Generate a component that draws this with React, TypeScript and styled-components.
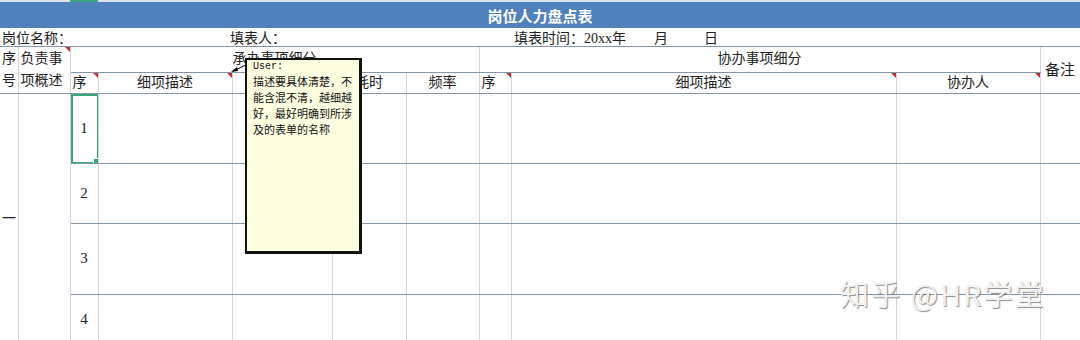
import React from 'react'
import styled, { createGlobalStyle } from 'styled-components'

const hLine = '#8596ab'
const vLine = '#d2d7de'

const GlobalStyle = createGlobalStyle`
  body {
    margin: 0;
    background: #fff;
    overflow: hidden;
    font-family: "Liberation Serif", "Noto Sans CJK SC", serif;
    color: #222;
  }
`

const Page = styled.div`
  position: relative;
  width: 1080px;
  height: 340px;
  overflow: hidden;
  background: #fff;
`

const TopStrip = styled.div`
  display: flex;
  height: 2px;
  background: #dde2e8;
`

const TopMark = styled.div`
  margin-left: 70px;
  width: 28px;
  background: #3aa57f;
`

const TitleBar = styled.div`
  display: flex;
  align-items: center;
  justify-content: center;
  height: 26px;
  background: #4f81bd;
  color: #fff;
  font-family: "Noto Sans CJK SC", sans-serif;
  font-weight: 700;
  font-size: 15px;
`

const InfoRow = styled.div`
  display: flex;
  align-items: center;
  height: 19px;
  border-bottom: 1px solid ${hLine};
  font-size: 14px;
  box-sizing: border-box;
`

const InfoItem = styled.div<{ $w?: number }>`
  flex: ${({ $w }) => ($w ? `0 0 ${$w}px` : '1')};
  padding-left: 2px;
  white-space: nowrap;
`

const DatePart = styled.span<{ $gap: number }>`
  margin-left: ${({ $gap }) => $gap}px;
`

const Sheet = styled.table`
  width: 1080px;
  table-layout: fixed;
  border-collapse: collapse;
  font-size: 14px;
`

const Row = styled.tr<{ $h: number }>`
  height: ${({ $h }) => $h}px;
`

const Cell = styled.td<{ $align?: string; $flat?: boolean; $lh?: number; $size?: number }>`
  position: relative;
  padding: 0 2px;
  text-align: ${({ $align }) => $align ?? 'center'};
  vertical-align: middle;
  border-right: 1px solid ${vLine};
  border-bottom: ${({ $flat }) => ($flat ? 'none' : `1px solid ${hLine}`)};
  line-height: ${({ $lh }) => $lh ?? 18}px;
  font-size: ${({ $size }) => $size ?? 14}px;
  overflow: hidden;
  white-space: nowrap;
`

const WrapCell = styled(Cell)`
  white-space: normal;
  word-break: break-all;
`

const Num = styled.span`
  font-size: 15px;
`

const Selected = styled.div`
  position: absolute;
  inset: 0 -1px -1px 0;
  border: 2px solid #35a67c;
  pointer-events: none;
`

const Handle = styled.div`
  position: absolute;
  right: -3px;
  bottom: -3px;
  width: 5px;
  height: 5px;
  background: #35a67c;
  border: 1px solid #fff;
`

const Corner = styled.span`
  position: absolute;
  top: 0;
  right: 0;
  width: 0;
  height: 0;
  border-top: 5px solid #c62f3a;
  border-left: 5px solid transparent;
`

const Note = styled.div`
  position: absolute;
  left: 245px;
  top: 58px;
  width: 117px;
  height: 196px;
  box-sizing: border-box;
  background: #ffffe1;
  border: 2px solid #111;
  border-right-width: 3px;
  border-bottom-width: 3px;
  padding: 1px 6px;
  font-family: "Noto Sans CJK SC", sans-serif;
  font-size: 11px;
  line-height: 16px;
  color: #111;
`

const NoteAuthor = styled.div`
  font-family: "Liberation Mono", monospace;
  font-size: 10px;
  line-height: 12px;
`

const NoteLine = styled.div`
  white-space: nowrap;
`

const Pointer = styled.svg`
  position: absolute;
  left: 228px;
  top: 60px;
`

const Watermark = styled.div`
  position: absolute;
  left: 840px;
  top: 272px;
  font-family: "Noto Sans CJK SC", sans-serif;
  font-size: 29px;
  color: #f2f2f2;
  text-shadow: 1px 1px 1px rgba(0, 0, 0, 0.45);
  letter-spacing: 2px;
  white-space: nowrap;
`

const widths = [18, 52, 28, 134, 100, 74, 73, 32, 385, 144, 40]
const bodyRows = [
  { n: 1, h: 70 },
  { n: 2, h: 60 },
  { n: 3, h: 71 },
  { n: 4, h: 51 },
]

const App: React.FC = () => {
  return (
    <Page>
      <GlobalStyle />
      <TopStrip>
        <TopMark />
      </TopStrip>
      <TitleBar>岗位人力盘点表</TitleBar>
      <InfoRow>
        <InfoItem $w={226}>岗位名称：</InfoItem>
        <InfoItem $w={282}>填表人：</InfoItem>
        <InfoItem>
          填表时间：20xx年
          <DatePart $gap={28}>月</DatePart>
          <DatePart $gap={36}>日</DatePart>
        </InfoItem>
      </InfoRow>

      <Sheet>
        <colgroup>
          {widths.map((w, i) => (
            <col key={i} style={{ width: w }} />
          ))}
        </colgroup>
        <tbody>
          <Row $h={25}>
            <WrapCell rowSpan={2} $align="left" $lh={22}>序号</WrapCell>
            <WrapCell rowSpan={2} $align="left" $lh={22}>
              负责事项概述
              <Corner />
            </WrapCell>
            <Cell colSpan={5}>承办事项细分</Cell>
            <Cell colSpan={3}>协办事项细分</Cell>
            <Cell rowSpan={2} $size={15}>备注</Cell>
          </Row>
          <Row $h={21}>
            <Cell $align="left">序<Corner /></Cell>
            <Cell>细项描述<Corner /></Cell>
            <Cell />
            <Cell>耗时</Cell>
            <Cell>频率</Cell>
            <Cell $align="left">序<Corner /></Cell>
            <Cell>细项描述<Corner /></Cell>
            <Cell>协办人<Corner /></Cell>
          </Row>
          {bodyRows.map(({ n, h }, i) => (
            <Row key={n} $h={h}>
              {i === 0 && (
                <>
                  <Cell rowSpan={4} $align="left" $flat>一</Cell>
                  <Cell rowSpan={4} $flat />
                </>
              )}
              <Cell>
                <Num>{n}</Num>
                {i === 0 && (
                  <Selected>
                    <Handle />
                  </Selected>
                )}
              </Cell>
              {Array.from({ length: 8 }).map((_, k) => (
                <Cell key={k} />
              ))}
            </Row>
          ))}
        </tbody>
      </Sheet>

      <Pointer width="22" height="16" viewBox="0 0 22 16">
        <line x1="5" y1="11" x2="18" y2="5" stroke="#000" strokeWidth="1" />
        <polygon points="3,12 9,7 10,11" fill="#000" />
      </Pointer>
      <Note>
        <NoteAuthor>User:</NoteAuthor>
        <NoteLine>描述要具体清楚，不</NoteLine>
        <NoteLine>能含混不清，越细越</NoteLine>
        <NoteLine>好，最好明确到所涉</NoteLine>
        <NoteLine>及的表单的名称</NoteLine>
      </Note>

      <Watermark>知乎 @HR学堂</Watermark>
    </Page>
  )
}

export default App
